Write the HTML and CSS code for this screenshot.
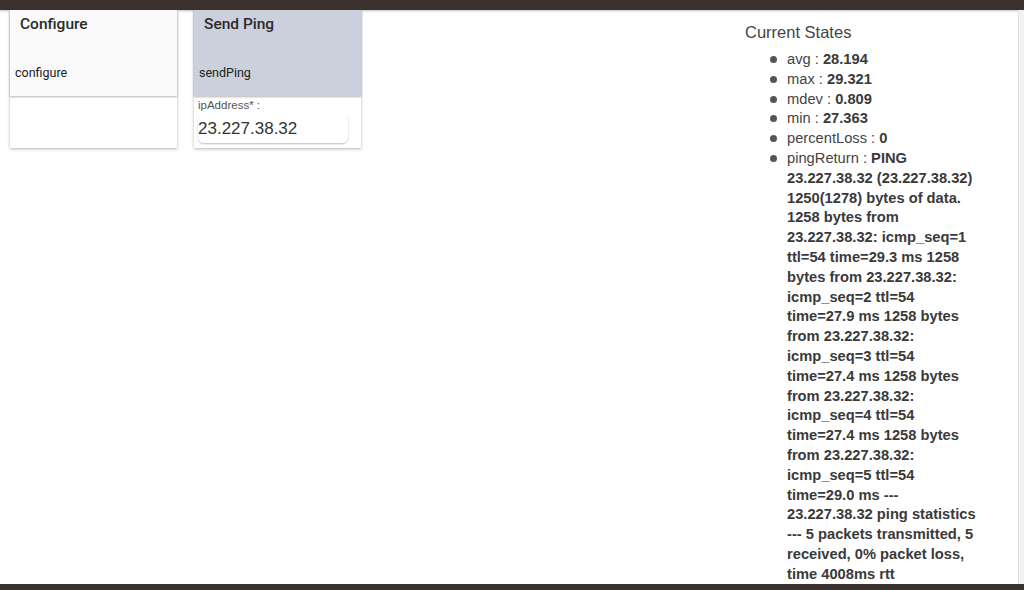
FILE: index.html
```html
<!DOCTYPE html>
<html lang="en">

<head>
    <meta charset="UTF-8">
    <title>Device Commands</title>
    <link rel="stylesheet" href="styles.css">
</head>

<body>
    <div class="top-bar"></div>

    <div class="main">
        <div class="commands">
            <div class="card">
                <div class="card-head">
                    <div class="card-title">Configure</div>
                    <div class="card-cmd">configure</div>
                </div>
                <div class="card-body"></div>
            </div>

            <div class="card">
                <div class="card-head active">
                    <div class="card-title">Send Ping</div>
                    <div class="card-cmd">sendPing</div>
                </div>
                <div class="card-body">
                    <label class="arg-label">ipAddress* :</label>
                    <div class="arg-input">23.227.38.32</div>
                </div>
            </div>
        </div>

        <div class="states">
            <h3 class="states-title">Current States</h3>
            <ul class="states-list">
                <li>avg : <b>28.194</b></li>
                <li>max : <b>29.321</b></li>
                <li>mdev : <b>0.809</b></li>
                <li>min : <b>27.363</b></li>
                <li>percentLoss : <b>0</b></li>
                <li>pingReturn : <b>PING 23.227.38.32 (23.227.38.32) 1250(1278) bytes of data. 1258 bytes from 23.227.38.32: icmp_seq=1 ttl=54 time=29.3 ms 1258 bytes from 23.227.38.32: icmp_seq=2 ttl=54 time=27.9 ms 1258 bytes from 23.227.38.32: icmp_seq=3 ttl=54 time=27.4 ms 1258 bytes from 23.227.38.32: icmp_seq=4 ttl=54 time=27.4 ms 1258 bytes from 23.227.38.32: icmp_seq=5 ttl=54 time=29.0 ms <span class="nowrap">---</span> 23.227.38.32 ping statistics <span class="nowrap">---</span> 5 packets transmitted, 5 received, 0% packet loss, time 4008ms rtt min/avg/max/mdev = 27.363/28.194/29.321/0.809 ms</b></li>
            </ul>
        </div>

        <div class="scroll-edge"></div>
    </div>

    <div class="bottom-bar"></div>
</body>

</html>
```

FILE: styles.css
```css
* {
    margin: 0;
    padding: 0;
    box-sizing: border-box;
}

body {
    font-family: 'Roboto', 'Liberation Sans', sans-serif;
    background: white;
    color: #333;
    height: 590px;
    display: flex;
    flex-direction: column;
    overflow: hidden;
}

.top-bar {
    height: 10px;
    flex-shrink: 0;
    background: #3a302d;
    box-shadow: 0 1px 2px rgba(0, 0, 0, 0.25);
}

.bottom-bar {
    height: 6px;
    flex-shrink: 0;
    background: #3a302d;
}

.main {
    flex: 1;
    display: flex;
    overflow: hidden;
}

.commands {
    display: flex;
    align-items: flex-start;
    gap: 17px;
    padding-left: 10px;
    width: 730px;
}

.card {
    width: 167px;
    background: white;
    box-shadow: 0 1px 3px rgba(0, 0, 0, 0.3);
}

.card-head {
    height: 86px;
    background: #fafafa;
    box-shadow: 0 1px 2px rgba(0, 0, 0, 0.3);
    position: relative;
}

.card-head.active {
    background: #cbd0dc;
}

.card-title {
    font-size: 15.5px;
    font-weight: 500;
    color: #2b2b2b;
    padding: 5px 10px 0;
    line-height: 18px;
}

.card-cmd {
    font-size: 12.5px;
    color: #222;
    padding: 0 5px;
    margin-top: 32px;
}

.card-body {
    height: 52px;
    padding: 3px 4px 0;
}

.arg-label {
    display: block;
    font-family: 'Liberation Sans', sans-serif;
    font-size: 11.5px;
    color: #555;
    line-height: 13px;
    margin-bottom: 2px;
}

.arg-input {
    width: 150px;
    height: 29px;
    font-family: 'Liberation Sans', sans-serif;
    font-size: 17px;
    color: #333;
    line-height: 29px;
    border-radius: 6px;
    box-shadow: 0 1px 2px rgba(0, 0, 0, 0.25);
}

.states {
    width: 288px;
    padding: 12px 15px 0;
    font-family: 'Liberation Sans', sans-serif;
    color: #444;
}

.states-title {
    font-size: 16.5px;
    font-weight: normal;
    color: #444;
    line-height: 20px;
    margin-bottom: 8px;
}

.states-list {
    list-style: none;
    padding-left: 42px;
    width: 231px;
    font-size: 14.7px;
    line-height: 19.8px;
}

.states-list li {
    position: relative;
}

/* bigger bullet than the default disc */
.states-list li::before {
    content: '';
    position: absolute;
    left: -17px;
    top: 6px;
    width: 7px;
    height: 7px;
    border-radius: 50%;
    background: #555;
}

.states-list b {
    color: #3a3a3a;
}

.nowrap {
    white-space: nowrap;
}

.scroll-edge {
    width: 6px;
    background: #f2f2f2;
    border-left: 1px solid #e2e2e2;
}
```
